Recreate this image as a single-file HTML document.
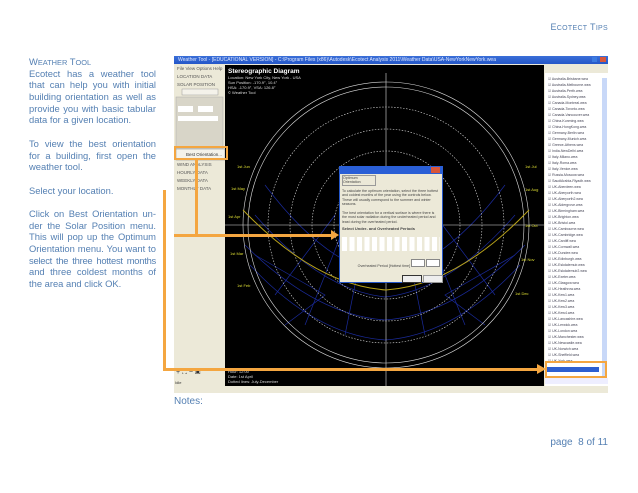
<!DOCTYPE html>
<html><head><meta charset="utf-8"><style>
body{margin:0;width:638px;height:493px;background:#fff;position:relative;overflow:hidden;font-family:"Liberation Sans",sans-serif;color:#5580b3}
.a{position:absolute}
#txt{left:29px;top:56px;width:127px;font-size:9.4px;line-height:11.7px}
#txt div{text-align:justify;text-align-last:justify;white-space:nowrap;height:11.7px}
#txt div.l{text-align-last:left}
.o{position:absolute;background:#f4a640}
</style></head><body>
<div class="a" style="right:30px;top:22px;font-size:9px;letter-spacing:.3px">E<span style="font-size:7px">COTECT</span> T<span style="font-size:7px">IPS</span></div>
<div id="txt" class="a">
<div class="l">W<span style="font-size:7.4px">EATHER</span> T<span style="font-size:7.4px">OOL</span></div>
<div>Ecotect has a weather tool</div>
<div>that can help you with initial</div>
<div>building orientation as well as</div>
<div>provide you with basic tabular</div>
<div class="l">data for a given location.</div>
<div class="l"></div>
<div>To view the best orientation</div>
<div>for a building, first open the</div>
<div class="l">weather tool.</div>
<div class="l"></div>
<div class="l">Select your location.</div>
<div class="l"></div>
<div>Click on Best Orientation un-</div>
<div>der the Solar Position menu.</div>
<div>This will pop up the Optimum</div>
<div>Orientation menu. You want to</div>
<div style="letter-spacing:-.25px">select the three hottest months</div>
<div>and three coldest months of</div>
<div class="l">the area and click OK.</div>
</div>
<!-- window -->
<div class="a" style="left:174px;top:56px;width:434px;height:337px;background:#ece9d8"></div>
<div class="a" style="left:174px;top:56px;width:434px;height:8px;background:linear-gradient(#3a6fd8,#2456c8)"></div>
<div class="a" style="left:178px;top:57px;font-size:5px;color:#dfe8ff;white-space:nowrap">Weather Tool - [EDUCATIONAL VERSION] - C:\Program Files (x86)\Autodesk\Ecotect Analysis 2011\Weather Data\USA-NewYorkNewYork.wea</div>
<div class="a" style="left:592px;top:57px;width:5px;height:5px;background:#3b7ae0"></div>
<div class="a" style="left:600px;top:57px;width:6px;height:5px;background:#d8563a"></div>
<svg class="a" style="left:174px;top:64px" width="52" height="322">
<g font-size="4.5" fill="#555" font-family="Liberation Sans">
<text x="3" y="6">File View Options Help</text>
<text x="3" y="14">LOCATION DATA</text><text x="3" y="22">SOLAR POSITION</text>
<text x="3" y="102">WIND ANALYSIS</text><text x="3" y="110">HOURLY DATA</text><text x="3" y="118">WEEKLY DATA</text><text x="3" y="126">MONTHLY DATA</text></g>
<rect x="8" y="25" width="36" height="6" fill="#f4f2ea" stroke="#999" stroke-width=".5"/>
<rect x="2" y="33" width="47" height="52" fill="#d8d5c8" stroke="#aaa" stroke-width=".5"/>
<rect x="4" y="42" width="15" height="6" fill="#fff"/><rect x="24" y="42" width="15" height="6" fill="#fff"/>
<rect x="4" y="52" width="40" height="5" fill="#fff"/>
<rect x="2" y="85" width="49" height="11" fill="#f4f2ea" stroke="#888" stroke-width=".5"/>
<text x="12" y="92" font-size="4.5" fill="#333">Best Orientation...</text>
<text x="2" y="310" font-size="7" fill="#333">+ ⛶ − ▣</text>
<text x="1" y="320" font-size="4" fill="#333">Idle</text>
</svg>
<!-- black diagram -->
<svg class="a" style="left:225px;top:65px" width="319" height="321">
<rect width="319" height="321" fill="#000"/>
<g fill="none" stroke="#1a2a9a" stroke-width=".7">
<path d="M20 180 Q90 250 160 255 Q230 250 300 180"/><path d="M25 200 Q90 270 160 275 Q230 270 295 200"/>
<path d="M30 150 Q95 225 160 232 Q225 225 290 150"/><path d="M40 120 Q100 200 160 210 Q220 200 280 120"/>
<path d="M50 230 L110 150 M80 260 L120 160 M120 270 L140 170 M200 270 L180 170 M240 260 L200 160 M270 230 L210 150"/>
<path d="M30 190 L100 230 L60 260 M290 190 L220 230 L260 260"/>
</g>
<g fill="none" stroke="#ddd" stroke-width=".6">
<circle cx="161" cy="160" r="143"/><circle cx="161" cy="160" r="138"/>
<g stroke-dasharray="1.5 1.5"><circle cx="161" cy="160" r="118"/><circle cx="161" cy="160" r="96"/><circle cx="161" cy="160" r="74"/><circle cx="161" cy="160" r="52"/><circle cx="161" cy="160" r="30"/></g>
<line x1="161" y1="8" x2="161" y2="321"/><line x1="0" y1="160" x2="319" y2="160"/>
</g>
<path d="M18 145 Q90 220 161 225 Q232 220 304 145" fill="none" stroke="#b8a21a" stroke-width="1"/>
<text x="3" y="8" font-size="6.5" font-weight="bold" fill="#fff">Stereographic Diagram</text>
<g font-size="4" fill="#ddd"><text x="3" y="14">Location: New York City, New York - USA</text><text x="3" y="19">Sun Position: -170.9°, 10.4°</text><text x="3" y="24">HSA: -170.9°, VSA: 126.8°</text><text x="3" y="29">© Weather Tool</text>
<text x="3" y="308">Hour: 12:00</text><text x="3" y="313">Date: 1st April</text><text x="3" y="318">Dotted lines: July-December</text></g>
<g font-size="4" fill="#dd3"><text x="12" y="103">1st Jun</text><text x="6" y="125">1st May</text><text x="3" y="153">1st Apr</text><text x="5" y="190">1st Mar</text><text x="12" y="222">1st Feb</text><text x="300" y="103">1st Jul</text><text x="300" y="126">1st Aug</text><text x="300" y="162">1st Oct</text><text x="296" y="196">1st Nov</text><text x="290" y="230">1st Dec</text></g>
</svg>
<!-- right list -->
<div class="a" style="left:545px;top:64px;width:63px;height:322px;background:#fff"></div>
<svg class="a" style="left:545px;top:64px" width="63" height="322">
<rect width="63" height="9" fill="#ece9d8"/>
<rect x="57" y="14" width="5" height="300" fill="#c8d8f8"/>
<g font-size="3.5" fill="#445">
<text x="3" y="16">☑ Australia-Brisbane.wea</text><text x="3" y="22">☑ Australia-Melbourne.wea</text><text x="3" y="28">☑ Australia-Perth.wea</text><text x="3" y="34">☑ Australia-Sydney.wea</text><text x="3" y="40">☑ Canada-Montreal.wea</text><text x="3" y="46">☑ Canada-Toronto.wea</text><text x="3" y="52">☑ Canada-Vancouver.wea</text><text x="3" y="58">☑ China-Kunming.wea</text><text x="3" y="64">☑ China-HongKong.wea</text><text x="3" y="70">☑ Germany-Berlin.wea</text><text x="3" y="76">☑ Germany-Munich.wea</text><text x="3" y="82">☑ Greece-Athens.wea</text><text x="3" y="88">☑ India-NewDelhi.wea</text><text x="3" y="94">☑ Italy-Milano.wea</text><text x="3" y="100">☑ Italy-Roma.wea</text><text x="3" y="106">☑ Italy-Venice.wea</text><text x="3" y="112">☑ Russia-Moscow.wea</text><text x="3" y="118">☑ SaudiArabia-Riyadh.wea</text><text x="3" y="124">☑ UK-Aberdeen.wea</text><text x="3" y="130">☑ UK-Aberporth.wea</text><text x="3" y="136">☑ UK-Aberporth2.wea</text><text x="3" y="142">☑ UK-Aldergrove.wea</text><text x="3" y="148">☑ UK-Birmingham.wea</text><text x="3" y="154">☑ UK-Brighton.wea</text><text x="3" y="160">☑ UK-Bristol.wea</text><text x="3" y="166">☑ UK-Cambourne.wea</text><text x="3" y="172">☑ UK-Cambridge.wea</text><text x="3" y="178">☑ UK-Cardiff.wea</text><text x="3" y="184">☑ UK-Cornwall.wea</text><text x="3" y="190">☑ UK-Dundee.wea</text><text x="3" y="196">☑ UK-Edinburgh.wea</text><text x="3" y="202">☑ UK-Eskdalemuir.wea</text><text x="3" y="208">☑ UK-Eskdalemuir2.wea</text><text x="3" y="214">☑ UK-Exeter.wea</text><text x="3" y="220">☑ UK-Glasgow.wea</text><text x="3" y="226">☑ UK-Heathrow.wea</text><text x="3" y="232">☑ UK-Kew1.wea</text><text x="3" y="238">☑ UK-Kew2.wea</text><text x="3" y="244">☑ UK-Kew3.wea</text><text x="3" y="250">☑ UK-Kew4.wea</text><text x="3" y="256">☑ UK-Lancashire.wea</text><text x="3" y="262">☑ UK-Lerwick.wea</text><text x="3" y="268">☑ UK-London.wea</text><text x="3" y="274">☑ UK-Manchester.wea</text><text x="3" y="280">☑ UK-Newcastle.wea</text><text x="3" y="286">☑ UK-Norwich.wea</text><text x="3" y="292">☑ UK-Sheffield.wea</text><text x="3" y="298">☑ UK-York.wea</text></g>
<rect x="2" y="303" width="52" height="5" fill="#2d5fd0"/>
<rect x="0" y="314" width="63" height="6" fill="#eef"/>
</svg>
<!-- dialog -->
<div class="a" style="left:339px;top:166px;width:104px;height:117px;background:#ece9d8;border:1px solid #2456c8;box-sizing:border-box"></div>
<div class="a" style="left:339px;top:166px;width:104px;height:8px;background:#2a5fd6"></div>
<div class="a" style="left:431px;top:167px;width:9px;height:6px;background:#d8563a"></div>
<div class="a" style="left:342px;top:175px;width:98px;height:96px;font-size:3.6px;line-height:4.4px;color:#444;overflow:hidden">
<div style="border:1px solid #999;width:32px;margin-bottom:3px">Optimum Orientation</div>
To calculate the optimum orientation, select the three hottest and coldest months of the year using the controls below. These will usually correspond to the summer and winter seasons.<br><br>The best orientation for a vertical surface is where there is the most solar radiation during the underheated period and least during the overheated period.
<div style="font-weight:bold;font-size:4px;margin-top:3px">Select Under- and Overheated Periods</div>
<div style="height:14px;margin-top:6px;background:repeating-linear-gradient(90deg,#fff 0 5px,#ece9d8 5px 7.5px)"></div>
<div style="margin-top:8px;text-align:right">Overheated Period [Hottest time] <span style="display:inline-block;width:12px;height:6px;background:#fff;border:1px solid #888"></span> <span style="display:inline-block;width:12px;height:6px;background:#fff;border:1px solid #888"></span></div>
<div style="margin-top:2px;text-align:right">Underheated Period [Coldest time] <span style="display:inline-block;width:12px;height:6px;background:#fff;border:1px solid #888"></span> <span style="display:inline-block;width:12px;height:6px;background:#fff;border:1px solid #888"></span></div>
</div>
<div class="a" style="left:402px;top:275px;width:18px;height:6px;border:1px solid #333;background:#eee"></div>
<div class="a" style="left:423px;top:275px;width:18px;height:6px;border:1px solid #999;background:#eee"></div>
<!-- orange annotations -->
<div class="a" style="left:174px;top:146px;width:50px;height:10px;border:2px solid #f4a640"></div>
<div class="o" style="left:195px;top:160px;width:3px;height:76px"></div>
<div class="o" style="left:174px;top:234px;width:158px;height:3px"></div>
<div class="a" style="left:331px;top:230px;width:0;height:0;border-left:8px solid #f4a640;border-top:5px solid transparent;border-bottom:5px solid transparent"></div>
<div class="o" style="left:163px;top:190px;width:3px;height:181px"></div>
<div class="o" style="left:163px;top:368px;width:375px;height:3px"></div>
<div class="a" style="left:537px;top:364px;width:0;height:0;border-left:9px solid #f4a640;border-top:5px solid transparent;border-bottom:5px solid transparent"></div>
<div class="a" style="left:545px;top:361px;width:58px;height:13px;border:2px solid #f4a640"></div>
<div class="a" style="left:174px;top:396px;font-size:10px">Notes:</div>
<div class="a" style="right:30px;top:437px;font-size:10px">page &nbsp;8 of 11</div>
</body></html>
